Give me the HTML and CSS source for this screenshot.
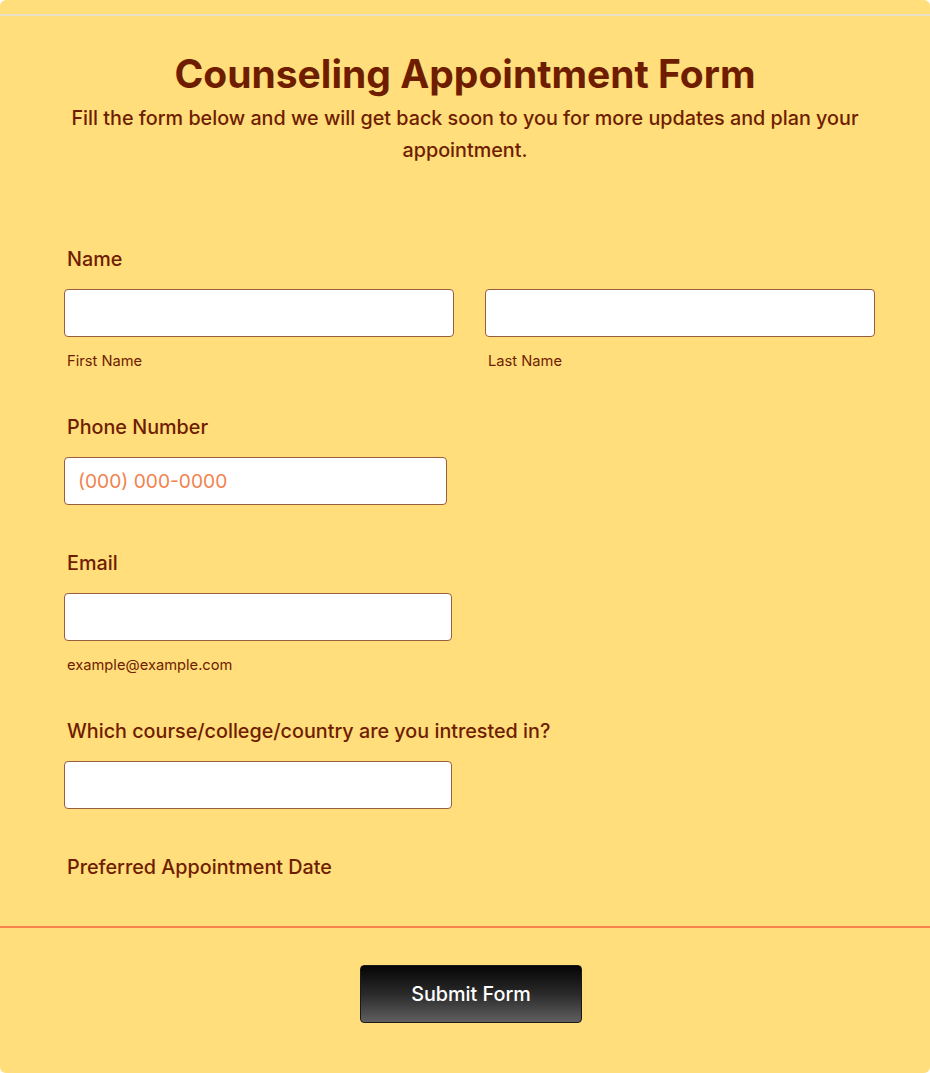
FILE: index.html
```html
<!DOCTYPE html>
<html lang="en">
<head>
<meta charset="utf-8">
<title>Counseling Appointment Form</title>
<link rel="stylesheet" href="styles.css">
</head>
<body>
<div class="card">
  <div class="topline"></div>
  <header class="header">
    <h1 class="title">Counseling Appointment Form</h1>
    <p class="subtitle">Fill the form below and we will get back soon to you for more updates and plan your appointment.</p>
  </header>
  <form class="form">
    <div class="field has-sub">
      <label class="label">Name</label>
      <div class="name-row">
        <div class="sub">
          <input class="input" type="text">
          <span class="sublabel">First Name</span>
        </div>
        <div class="sub">
          <input class="input" type="text">
          <span class="sublabel">Last Name</span>
        </div>
      </div>
    </div>
    <div class="field">
      <label class="label">Phone Number</label>
      <input class="input phone" type="text" placeholder="(000) 000-0000">
    </div>
    <div class="field has-sub">
      <label class="label">Email</label>
      <div class="sub">
        <input class="input email" type="text">
        <span class="sublabel">example@example.com</span>
      </div>
    </div>
    <div class="field">
      <label class="label">Which course/college/country are you intrested in?</label>
      <input class="input email" type="text">
    </div>
    <div class="field last">
      <label class="label">Preferred Appointment Date</label>
    </div>
  </form>
  <div class="footer">
    <button class="submit" type="button">Submit Form</button>
  </div>
</div>
</body>
</html>
```

FILE: styles.css
```css
* { box-sizing: border-box; }
html, body { margin: 0; padding: 0; background: #ffffff; }
body { font-family: Inter, "Noto Sans", sans-serif; color: #6f1d00; }

.card {
  width: 930px;
  height: 1073px;
  background: #ffde7b;
  border-radius: 6px;
  overflow: hidden;
}

.topline {
  margin-top: 14px;
  height: 2px;
  background: #ebe2c6;
}

.header {
  text-align: center;
  padding: 35px 40px 0;
}
.title {
  margin: 0;
  font-size: 39px;
  line-height: 46px;
  font-weight: 700;
  color: #6f1d00;
}
.subtitle {
  margin: 5px 0 0;
  font-size: 19.75px;
  line-height: 32px;
  font-weight: 500;
}

.form {
  padding: 81px 55px 0 64px;
  display: flex;
  flex-direction: column;
}
.field {
  display: flex;
  flex-direction: column;
  gap: 18px;
  margin-bottom: 46px;
}
.field.has-sub { margin-bottom: 44px; }
.field.last { margin-bottom: 47px; }
.label {
  font-size: 19.75px;
  line-height: 24px;
  font-weight: 500;
  padding-left: 3px;
}
.name-row { display: flex; gap: 31px; }
.sub { display: flex; flex-direction: column; gap: 14px; }
.name-row .sub { width: 390px; }
.sublabel {
  font-size: 14.7px;
  line-height: 20px;
  padding-left: 3px;
}
.input {
  width: 100%;
  height: 48px;
  border: 1px solid #9a5d3e;
  border-radius: 4px;
  background: #ffffff;
  font-family: Inter, "Noto Sans", sans-serif;
  font-size: 19.2px;
  font-weight: 400;
  padding: 0 13px;
  outline: none;
}
.input::placeholder { color: #f2834e; }
.phone { width: 383px; }
.email { width: 388px; }
.field > .sub { width: 388px; }

.footer {
  border-top: 2px solid #f5844c;
  display: flex;
  justify-content: center;
  padding: 37px 0 0 12px;
}
.submit {
  width: 222px;
  height: 58px;
  border: 1px solid #1a1a1a;
  border-radius: 4px;
  background: linear-gradient(to bottom, #050505 0%, #2a2a2a 50%, #5f5f5f 100%);
  color: #ffffff;
  font-family: Inter, "Noto Sans", sans-serif;
  font-size: 19.75px;
  font-weight: 500;
}
```
